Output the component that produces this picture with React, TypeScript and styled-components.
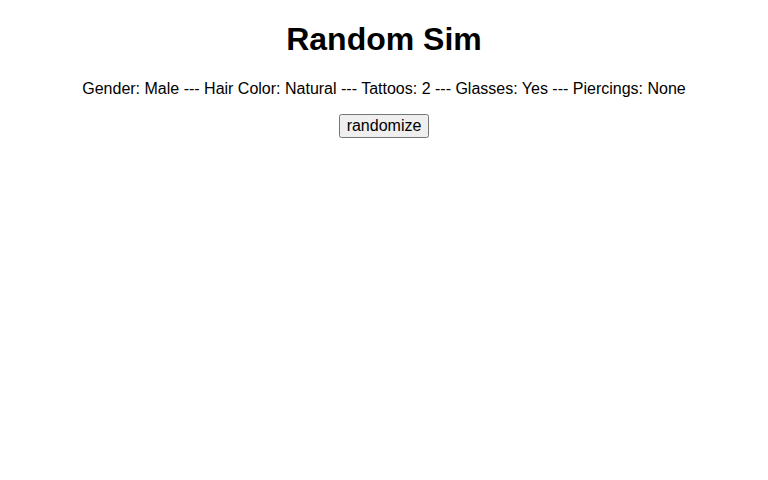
import { useState } from "react";
import styled, { createGlobalStyle } from "styled-components";

// ---------- Global ----------

const GlobalStyle = createGlobalStyle`
  body {
    margin: 0;
    font-family: "Liberation Sans", Arial, sans-serif;
    background: #fff;
    color: #000;
  }
`;

// ---------- Styles ----------

const Page = styled.div`
  padding: 0 8px;
  text-align: center;
`;

const Title = styled.h1`
  font-size: 32px;
  font-weight: bold;
  margin: 21.44px 0;
`;

const Traits = styled.p`
  font-size: 16px;
  margin: 16px 0;
`;

const Actions = styled.div`
  margin: 16px 0;
`;

const RandomButton = styled.button`
  font-family: "Liberation Sans", Arial, sans-serif;
  font-size: 16px;
`;

// ---------- Data ----------

const pick = <T,>(list: T[]) => list[Math.floor(Math.random() * list.length)];

const GENDERS = ["Male", "Female"];
const HAIR = ["Natural", "Dyed", "Bald"];
const TATTOOS = ["None", "1", "2", "3"];
const GLASSES = ["Yes", "No"];
const PIERCINGS = ["None", "Ears", "Nose", "Lip"];

interface Sim {
  gender: string;
  hair: string;
  tattoos: string;
  glasses: string;
  piercings: string;
}

// ---------- App ----------

export default function App() {
  const [sim, setSim] = useState<Sim>({
    gender: "Male",
    hair: "Natural",
    tattoos: "2",
    glasses: "Yes",
    piercings: "None",
  });

  const randomize = () =>
    setSim({
      gender: pick(GENDERS),
      hair: pick(HAIR),
      tattoos: pick(TATTOOS),
      glasses: pick(GLASSES),
      piercings: pick(PIERCINGS),
    });

  return (
    <Page>
      <GlobalStyle />
      <Title>Random Sim</Title>
      <Traits>
        Gender: {sim.gender} --- Hair Color: {sim.hair} --- Tattoos: {sim.tattoos} ---
        Glasses: {sim.glasses} --- Piercings: {sim.piercings}
      </Traits>
      <Actions>
        <RandomButton onClick={randomize}>randomize</RandomButton>
      </Actions>
    </Page>
  );
}
